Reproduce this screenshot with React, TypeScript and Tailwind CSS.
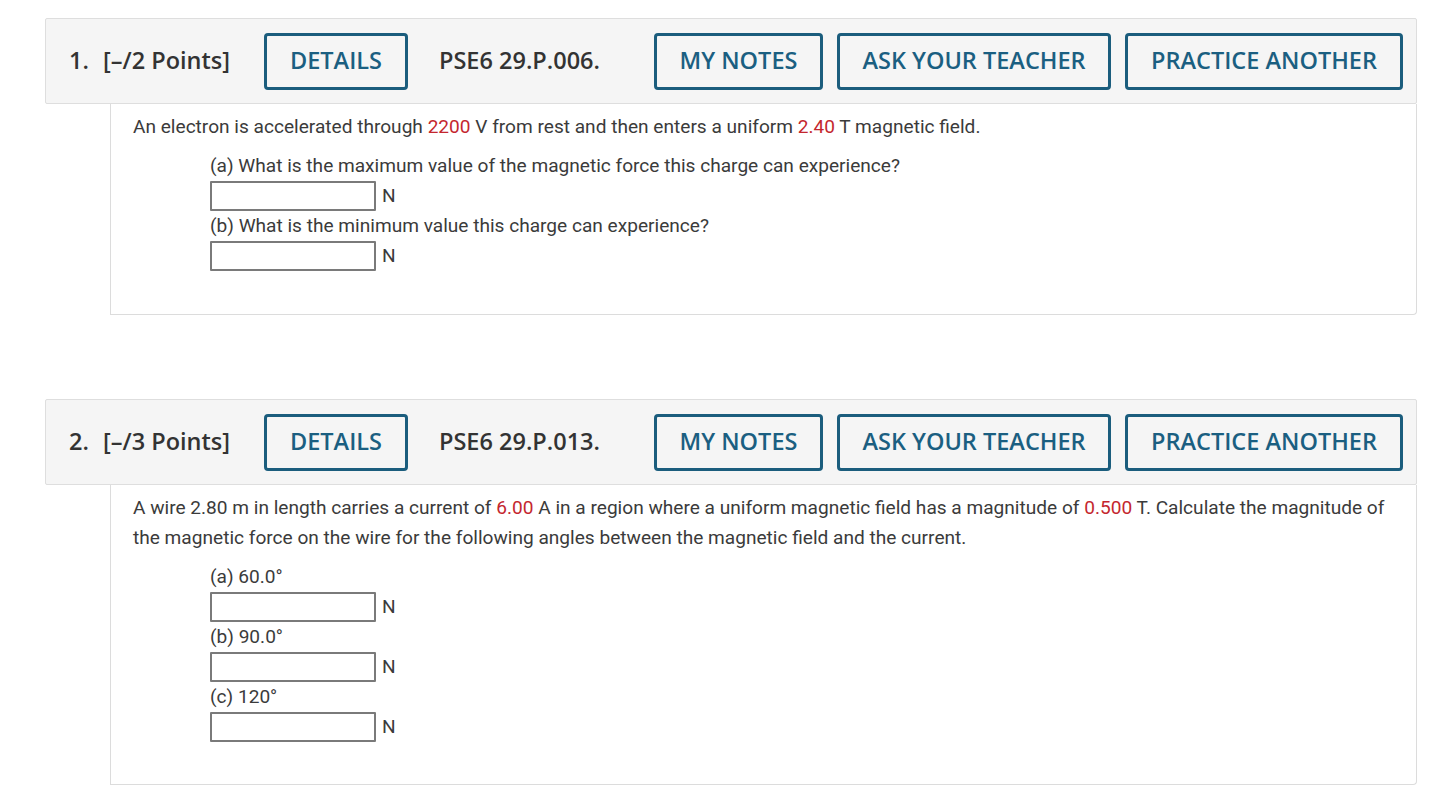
import React from 'react';

type Part = { label: string };

function Red({ children }: { children: React.ReactNode }) {
  return <span className="text-[#c4262e]">{children}</span>;
}

function Btn({ label, w }: { label: string; w: string }) {
  return (
    <button
      className={`${w} h-[57px] shrink-0 rounded-[4px] border-[3px] border-[#1b5d7d] bg-[#f5f5f5] text-[23.5px] font-semibold text-[#1b5f81]`}
    >
      {label}
    </button>
  );
}

function Header({ num, pts, code }: { num: string; pts: string; code: string }) {
  return (
    <div className="flex h-[86px] items-center rounded-[2px] border border-[#dedede] bg-[#f5f5f5] pl-[23px] pr-[13px] font-['Open_Sans',sans-serif] text-[23.5px] font-semibold text-[#333]">
      <span className="w-[34px]">{num}</span>
      <span className="w-[161px]">{pts}</span>
      <Btn label="DETAILS" w="w-[144px]" />
      <span className="ml-[31px]">{code}</span>
      <div className="ml-auto flex gap-[14px]">
        <Btn label="MY NOTES" w="w-[169px]" />
        <Btn label="ASK YOUR TEACHER" w="w-[274px]" />
        <Btn label="PRACTICE ANOTHER" w="w-[278px]" />
      </div>
    </div>
  );
}

function Answers({ parts }: { parts: Part[] }) {
  return (
    <div className="ml-[77px] mt-[9px]">
      {parts.map((p) => (
        <div key={p.label}>
          <div className="h-[30px] leading-[30px]">{p.label}</div>
          <div className="flex h-[30px] items-center">
            <input className="h-[30px] w-[166px] rounded-[1px] border-2 border-[#7a7a7a] bg-white" />
            <span className="ml-[6px]">N</span>
          </div>
        </div>
      ))}
    </div>
  );
}

export default function App() {
  return (
    <div className="min-h-screen bg-white pl-[45px] pr-[23px] pt-[18px] font-['Roboto',sans-serif] text-[19.1px] text-[#3b3b3b]">
      <section>
        <Header num="1." pts="[–/2 Points]" code="PSE6 29.P.006." />
        <div className="ml-[65px] rounded-br-[4px] border-x border-b border-[#dcdcdc] pb-[43px] pl-[22px] pr-[22px] pt-[8px]">
          <p className="leading-[30px]">
            An electron is accelerated through <Red>2200</Red> V from rest and then enters a uniform <Red>2.40</Red> T
            magnetic field.
          </p>
          <Answers
            parts={[
              { label: '(a) What is the maximum value of the magnetic force this charge can experience?' },
              { label: '(b) What is the minimum value this charge can experience?' },
            ]}
          />
        </div>
      </section>

      <section className="mt-[84px]">
        <Header num="2." pts="[–/3 Points]" code="PSE6 29.P.013." />
        <div className="ml-[65px] rounded-br-[4px] border-x border-b border-[#dcdcdc] pb-[42px] pl-[22px] pr-[22px] pt-[8px]">
          <p className="leading-[30px]">
            A wire 2.80 m in length carries a current of <Red>6.00</Red> A in a region where a uniform magnetic field
            has a magnitude of <Red>0.500</Red> T. Calculate the magnitude of the magnetic force on the wire for the
            following angles between the magnetic field and the current.
          </p>
          <Answers parts={[{ label: '(a) 60.0°' }, { label: '(b) 90.0°' }, { label: '(c) 120°' }]} />
        </div>
      </section>
    </div>
  );
}
